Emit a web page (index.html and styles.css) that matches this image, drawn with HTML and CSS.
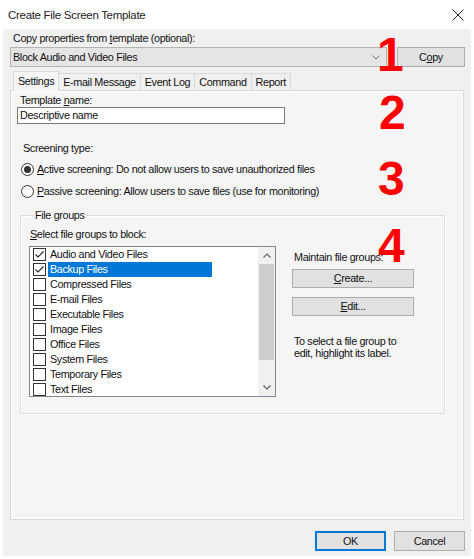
FILE: index.html
```html
<!DOCTYPE html>
<html>
<head>
<meta charset="utf-8">
<title>Create File Screen Template</title>
<link rel="stylesheet" href="styles.css">
</head>
<body>
<div class="window">
  <div class="titlebar">
    <span class="title">Create File Screen Template</span>
    <svg class="close" width="12" height="12" viewBox="0 0 12 12"><path d="M0.5 0.5 L11.5 11.5 M11.5 0.5 L0.5 11.5" stroke="#222" stroke-width="1" fill="none"/></svg>
  </div>
  <div class="client">
    <div class="lbl top-lbl">Copy properties from <u>t</u>emplate (optional):</div>
    <div class="combo-row">
      <div class="combo">
        <span class="combo-text">Block Audio and Video Files</span>
        <svg class="chev" width="8" height="5" viewBox="0 0 8 5"><path d="M0.5 0.5 L4 4 L7.5 0.5" stroke="#707070" stroke-width="1" fill="none"/></svg>
      </div>
      <div class="btn copy">C<u>o</u>py</div>
    </div>
    <div class="tabs">
      <div class="tab active">Settings</div>
      <div class="tab">E-mail Message</div>
      <div class="tab">Event Log</div>
      <div class="tab">Command</div>
      <div class="tab">Report</div>
    </div>
    <div class="panel">
      <div class="lbl name-lbl">Template <u>n</u>ame:</div>
      <div class="input">Descriptive name</div>
      <div class="lbl screen-lbl">Screening type:</div>
      <div class="radio-row first">
        <span class="radio checked"><span class="dot"></span></span>
        <span class="lbl"><u>A</u>ctive screening: Do not allow users to save unauthorized files</span>
      </div>
      <div class="radio-row">
        <span class="radio"></span>
        <span class="lbl"><u>P</u>assive screening: Allow users to save files (use for monitoring)</span>
      </div>
      <fieldset class="group">
        <legend>File groups</legend>
        <div class="lbl sel-lbl"><u>S</u>elect file groups to block:</div>
        <div class="group-row">
          <div class="listbox">
            <div class="items">
              <div class="item"><span class="cb"><svg width="11" height="11" viewBox="0 0 11 11"><path d="M1.5 5.5 L4 8 L9.5 2.5" stroke="#222" stroke-width="1.1" fill="none"/></svg></span><span class="itext">Audio and Video Files</span></div>
              <div class="item"><span class="cb"><svg width="11" height="11" viewBox="0 0 11 11"><path d="M1.5 5.5 L4 8 L9.5 2.5" stroke="#222" stroke-width="1.1" fill="none"/></svg></span><span class="itext selected">Backup Files</span></div>
              <div class="item"><span class="cb"></span><span class="itext">Compressed Files</span></div>
              <div class="item"><span class="cb"></span><span class="itext">E-mail Files</span></div>
              <div class="item"><span class="cb"></span><span class="itext">Executable Files</span></div>
              <div class="item"><span class="cb"></span><span class="itext">Image Files</span></div>
              <div class="item"><span class="cb"></span><span class="itext">Office Files</span></div>
              <div class="item"><span class="cb"></span><span class="itext">System Files</span></div>
              <div class="item"><span class="cb"></span><span class="itext">Temporary Files</span></div>
              <div class="item"><span class="cb"></span><span class="itext">Text Files</span></div>
            </div>
            <div class="scrollbar">
              <div class="arrow"><svg width="8" height="5" viewBox="0 0 8 5"><path d="M0.5 4.5 L4 1 L7.5 4.5" stroke="#606060" stroke-width="1.2" fill="none"/></svg></div>
              <div class="track"><div class="thumb"></div></div>
              <div class="arrow"><svg width="8" height="5" viewBox="0 0 8 5"><path d="M0.5 0.5 L4 4 L7.5 0.5" stroke="#606060" stroke-width="1.2" fill="none"/></svg></div>
            </div>
          </div>
          <div class="side">
            <div class="lbl maint-lbl">Maintain file groups:</div>
            <div class="btn side-btn create"><u>C</u>reate...</div>
            <div class="btn side-btn edit"><u>E</u>dit...</div>
            <div class="lbl hint">To select a file group to<br>edit, highlight its label.</div>
          </div>
        </div>
      </fieldset>
    </div>
    <div class="footer">
      <div class="btn foot-btn ok">OK</div>
      <div class="btn foot-btn">Cancel</div>
    </div>
  </div>
  <div class="anno a1">1</div>
  <div class="anno a2">2</div>
  <div class="anno a3">3</div>
  <div class="anno a4">4</div>
</div>
</body>
</html>
```

FILE: styles.css
```css
html, body {
  margin: 0;
  padding: 0;
  background: #ffffff;
}

.window {
  position: relative;
  width: 474px;
  height: 559px;
  display: flex;
  flex-direction: column;
  font-family: "Liberation Sans", Arial, sans-serif;
  font-size: 10.8px;
  letter-spacing: -0.35px;
  color: #111111;
  background: #ffffff;
  overflow: hidden;
}

u {
  text-decoration: underline;
  text-underline-offset: 1px;
}

.titlebar {
  height: 29px;
  display: flex;
  align-items: center;
  justify-content: space-between;
  padding: 0 10px 0 8px;
  flex: none;
}

.title {
  font-size: 11.5px;
  letter-spacing: -0.3px;
  color: #222;
  margin-top: 1px;
}

.close {
  margin-top: 1px;
}

.client {
  flex: none;
  height: 527px;
  margin: 0 3px;
  background: #f0f0f0;
  padding: 3px 6px 0 7px;
  box-sizing: border-box;
  display: flex;
  flex-direction: column;
}

.lbl {
  line-height: 13px;
  white-space: nowrap;
}

.top-lbl {
  margin-left: 3px;
}

.combo-row {
  display: flex;
  margin-top: 2px;
  gap: 10px;
}

.combo {
  width: 377px;
  height: 20px;
  box-sizing: border-box;
  border: 1px solid #b4b4b4;
  background: #e5e5e5;
  display: flex;
  align-items: center;
  justify-content: space-between;
  padding: 0 6px 0 2px;
}

.combo-text {
  line-height: 13px;
}

.btn {
  box-sizing: border-box;
  border: 1px solid #adadad;
  background: #e1e1e1;
  display: flex;
  align-items: center;
  justify-content: center;
  line-height: 13px;
  white-space: nowrap;
}

.copy {
  width: 68px;
  height: 20px;
}

.tabs {
  display: flex;
  align-items: flex-start;
  margin-top: 4px;
  margin-left: 3px;
  height: 20px;
  position: relative;
  z-index: 2;
}

.tab {
  height: 17px;
  margin-top: 2px;
  box-sizing: border-box;
  border: 1px solid #d9d9d9;
  border-left: none;
  border-bottom: none;
  background: #f0f0f0;
  padding: 1px 4px 0 4px;
  line-height: 14px;
  white-space: nowrap;
}

.tab.active {
  height: 20px;
  margin-top: 0;
  border-left: 1px solid #d9d9d9;
  background: #f5f5f5;
  padding: 2px 4px 0 4px;
}

.panel {
  position: relative;
  z-index: 1;
  margin-top: -1px;
  width: 454px;
  height: 430px;
  box-sizing: border-box;
  border: 1px solid #d9d9d9;
  box-shadow: inset 1px 1px 0 #ffffff, inset -1px -1px 0 #ffffff;
  background: #f5f5f5;
  display: flex;
  flex-direction: column;
  align-items: flex-start;
}

.name-lbl {
  margin: 3px 0 0 9px;
}

.input {
  margin-left: 6px;
  width: 268px;
  height: 17px;
  box-sizing: border-box;
  border: 1px solid #7a7a7a;
  background: #ffffff;
  padding-left: 2px;
  line-height: 15px;
  white-space: nowrap;
}

.screen-lbl {
  margin: 18px 0 0 12px;
}

.radio-row {
  display: flex;
  align-items: center;
  height: 16px;
  margin: 6px 0 0 10px;
  gap: 3px;
}

.radio {
  width: 13px;
  height: 13px;
  box-sizing: border-box;
  border: 1px solid #333333;
  border-radius: 50%;
  background: #ffffff;
  display: flex;
  align-items: center;
  justify-content: center;
}

.dot {
  width: 7px;
  height: 7px;
  border-radius: 50%;
  background: #333333;
}

.group {
  margin: 10px 0 0 9px;
  width: 425px;
  box-sizing: border-box;
  border: 1px solid #dcdcdc;
  box-shadow: 1px 1px 0 #ffffff, inset 1px 1px 0 #ffffff;
  padding: 0 0 16px 8px;
  min-inline-size: 0;
}

.group legend {
  padding: 0 1px;
  margin-left: 5px;
  line-height: 13px;
}

.sel-lbl {
  margin: 6px 0 0 1px;
}

.group-row {
  display: flex;
  align-items: flex-start;
  margin-top: 5px;
  gap: 16px;
}

.listbox {
  width: 247px;
  height: 151px;
  box-sizing: border-box;
  border: 1px solid #828790;
  background: #ffffff;
  display: flex;
}

.items {
  flex: 1;
  display: flex;
  flex-direction: column;
}

.item {
  height: 15px;
  display: flex;
  align-items: center;
  padding-left: 3px;
}

.cb {
  width: 13px;
  height: 13px;
  box-sizing: border-box;
  border: 1px solid #333333;
  background: #ffffff;
  display: flex;
  align-items: center;
  justify-content: center;
  margin-right: 2px;
  flex: none;
}

.itext {
  width: 164px;
  height: 15px;
  line-height: 15px;
  padding-left: 2px;
  box-sizing: border-box;
  white-space: nowrap;
}

.itext.selected {
  background: #0078d7;
  color: #ffffff;
}

.scrollbar {
  width: 17px;
  display: flex;
  flex-direction: column;
  background: #f0f0f0;
}

.arrow {
  height: 17px;
  display: flex;
  align-items: center;
  justify-content: center;
  flex: none;
}

.track {
  flex: 1;
  display: flex;
  flex-direction: column;
}

.thumb {
  height: 96px;
  margin: 0 1px;
  background: #cdcdcd;
}

.side {
  display: flex;
  flex-direction: column;
  align-items: flex-start;
  padding-top: 5px;
}

.maint-lbl {
  margin-left: 2px;
}

.side-btn {
  width: 122px;
  height: 19px;
}

.create {
  margin-top: 5px;
}

.edit {
  margin-top: 9px;
}

.hint {
  margin: 19px 0 0 2px;
  line-height: 12px;
}

.footer {
  display: flex;
  justify-content: flex-end;
  gap: 8px;
  margin-top: 11px;
}

.foot-btn {
  width: 71px;
  height: 20px;
}

.ok {
  border: 1px solid #0078d7;
  box-shadow: inset 0 0 0 1px #0078d7;
}

.anno {
  position: absolute;
  z-index: 5;
  font-family: "Liberation Sans", Arial, sans-serif;
  font-weight: bold;
  font-size: 48px;
  line-height: 48px;
  letter-spacing: 0;
  color: #ff0000;
}

.a1 { left: 377px; top: 31px; }
.a2 { left: 379px; top: 89px; }
.a3 { left: 378px; top: 155px; }
.a4 { left: 378px; top: 222px; }
```
